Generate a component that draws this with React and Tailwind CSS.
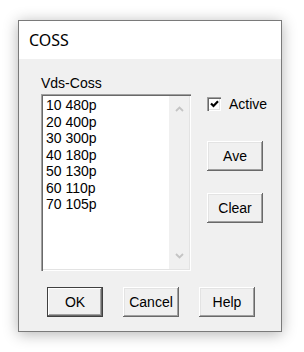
const font = { fontFamily: '"Liberation Sans", Arial, sans-serif' };

const items = ['10 480p', '20 400p', '30 300p', '40 180p', '50 130p', '60 110p', '70 105p'];

const Button = ({ label, isDefault }) => (
  <button
    className={`w-[56px] h-[30px] bg-[#f0f0f0] text-[14px] text-black leading-none ${
      isDefault
        ? 'border border-[#404040] shadow-[inset_-1px_-1px_0_#696969,inset_1px_1px_0_#ffffff,inset_-2px_-2px_0_#a0a0a0]'
        : 'shadow-[inset_-1px_-1px_0_#696969,inset_1px_1px_0_#ffffff,inset_-2px_-2px_0_#a0a0a0,inset_2px_2px_0_#e3e3e3]'
    }`}
    style={font}
  >
    {label}
  </button>
);

const Arrow = ({ up }) => (
  <svg width="9" height="6" viewBox="0 0 9 6">
    <path d={up ? 'M1 5 L4.5 1.5 L8 5' : 'M1 1 L4.5 4.5 L8 1'} fill="none" stroke="#c4c4c4" strokeWidth="1.8" />
  </svg>
);

export default function App() {
  return (
    <div className="w-[304px] h-[352px] bg-white pt-[20px] pl-[18px]" style={font}>
      <div className="w-[264px] h-[312px] border border-[#7a7a7a] bg-[#f0f0f0] shadow-[0_2px_14px_rgba(0,0,0,0.3)] flex flex-col">
        <div className="h-[38px] bg-white flex items-center pl-[10px] text-[16px] text-black" style={{ fontFamily: '"Noto Sans", "Open Sans", sans-serif' }}>
          COSS
        </div>
        <div className="flex-1 pt-[16px] pl-[22px]">
          <div className="text-[14px] leading-[16px] text-black mb-[3px]">Vds-Coss</div>
          <div className="flex">
            <div className="w-[150px] h-[177px] bg-white p-[2px] shadow-[inset_1px_1px_0_#a0a0a0,inset_2px_2px_0_#696969,inset_-1px_-1px_0_#ffffff,inset_-2px_-2px_0_#e3e3e3] flex">
              <div className="flex-1 pl-[3px] pt-[1px] text-[14px] leading-[16.5px] text-black">
                {items.map((it) => (
                  <div key={it}>{it}</div>
                ))}
              </div>
              <div className="w-[20px] bg-[#f0f0f0] flex flex-col justify-between items-center py-[10px]">
                <Arrow up />
                <Arrow />
              </div>
            </div>
            <div className="ml-[16px] pt-[2px] flex flex-col items-start">
              <div className="flex items-center h-[16px]">
                <div className="w-[14px] h-[14px] bg-white shadow-[inset_1px_1px_0_#a0a0a0,inset_2px_2px_0_#696969,inset_-1px_-1px_0_#ffffff,inset_-2px_-2px_0_#e3e3e3] flex items-center justify-center">
                  <svg width="9" height="8" viewBox="0 0 9 8">
                    <path d="M1 3.5 L3.5 6 L8 1.2" fill="none" stroke="#000" strokeWidth="2.2" />
                  </svg>
                </div>
                <span className="ml-[8px] text-[14px] text-black">Active</span>
              </div>
              <div className="mt-[29px]">
                <Button label="Ave" />
              </div>
              <div className="mt-[22px]">
                <Button label="Clear" />
              </div>
            </div>
          </div>
          <div className="flex gap-[20px] mt-[16px] ml-[6px]">
            <Button label="OK" isDefault />
            <Button label="Cancel" />
            <Button label="Help" />
          </div>
        </div>
      </div>
    </div>
  );
}
